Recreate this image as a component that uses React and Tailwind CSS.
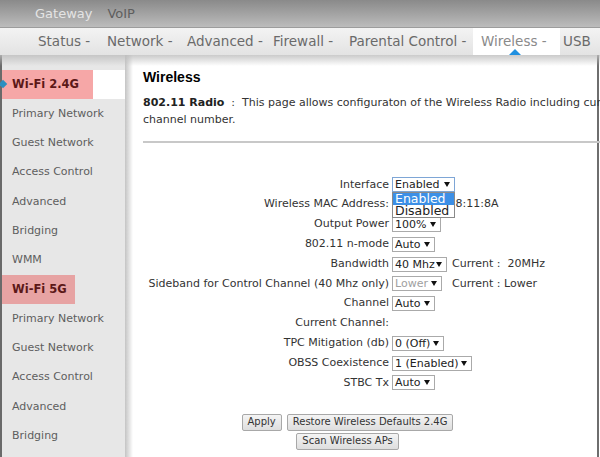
import React from 'react';

const navItems = [
  { label: 'Status -', w: 'w-[69px] pl-[7px]' },
  { label: 'Network -', w: 'w-[80px] pl-[7px]' },
  { label: 'Advanced -', w: 'w-[86px] pl-[7px]' },
  { label: 'Firewall -', w: 'w-[76px] pl-[7px]' },
  { label: 'Parental Control -', w: 'w-[131px] pl-[7px]' },
  { label: 'Wireless -', w: 'w-[87px] pl-[8px]', active: true },
  { label: 'USB', w: 'pl-[3px]' },
];

const sideItems = [
  { label: 'Wi-Fi 2.4G', head: true, first: true },
  { label: 'Primary Network' },
  { label: 'Guest Network' },
  { label: 'Access Control' },
  { label: 'Advanced' },
  { label: 'Bridging' },
  { label: 'WMM' },
  { label: 'Wi-Fi 5G', head: true },
  { label: 'Primary Network' },
  { label: 'Guest Network' },
  { label: 'Access Control' },
  { label: 'Advanced' },
  { label: 'Bridging' },
];

function Arrow() {
  return (
    <svg width="6" height="5" viewBox="0 0 6 5" className="shrink-0">
      <polygon points="0,0 6,0 3,5" fill="#111" />
    </svg>
  );
}

function Select({ value, width, disabled, focused }) {
  return (
    <div
      className={`h-[15px] flex items-center justify-between pl-[2px] pr-[4px] bg-white text-[11px] leading-none border ${
        focused ? 'border-[#7ea6d6]' : 'border-[#aaaaaa]'
      } ${disabled ? 'text-[#a0a0a0]' : 'text-[#222]'}`}
      style={{ width }}
    >
      <span>{value}</span>
      <Arrow />
    </div>
  );
}

function Row({ label, children }) {
  return (
    <div className="flex items-center h-[19.8px]">
      <div className="w-[249px] text-right pr-[3px] whitespace-nowrap">{label}</div>
      <div className="flex items-center">{children}</div>
    </div>
  );
}

function Btn({ children }) {
  return (
    <button className="h-[17px] px-[5px] text-[10px] leading-none text-[#333] border border-[#a8a8a8] rounded-[2px] bg-gradient-to-b from-[#f4f4f4] to-[#dedede]">
      {children}
    </button>
  );
}

export default function App() {
  return (
    <div className="w-[600px] h-[457px] overflow-hidden bg-white flex flex-col" style={{ fontFamily: '"DejaVu Sans", Verdana, sans-serif' }}>
      {/* top bar */}
      <div className="h-[27px] shrink-0 bg-gradient-to-b from-[#8a8a8a] to-[#bcbcbc] flex items-center pl-[35px] text-[13px]">
        <span className="text-[#e4e4e4]">Gateway</span>
        <span className="ml-[15px] text-[#5e5e5e]">VoIP</span>
      </div>

      {/* nav bar */}
      <div className="h-[28px] shrink-0 flex bg-gradient-to-b from-[#f3f3f3] to-[#e3e3e3] border-t border-[#9c9c9c] text-[13.5px] text-[#6a6a6a]">
        <div className="w-[31px] shrink-0" />
        {navItems.map((n) => (
          <div
            key={n.label}
            className={`relative shrink-0 flex items-center whitespace-nowrap ${n.w} ${n.active ? 'bg-white text-[#8a8a8a]' : ''}`}
          >
            {n.label}
            {n.active && (
              <span className="absolute bottom-0 left-[36px] w-0 h-0 border-l-[6px] border-r-[6px] border-b-[6px] border-l-transparent border-r-transparent border-b-[#2090e0]" />
            )}
          </div>
        ))}
      </div>

      {/* body */}
      <div className="relative flex flex-1 min-h-0">
        <div className="pointer-events-none absolute top-0 left-0 right-0 h-[11px] bg-gradient-to-b from-[#bdbdbd]/80 to-transparent z-10" />

        {/* sidebar */}
        <div className="w-[125px] shrink-0 bg-[#e7e7e7] border-l-2 border-[#6a6a6a] pt-[15px] text-[11px] text-[#5e5e5e]">
          {sideItems.map((s, i) => (
            <div key={i} className={`relative h-[29.3px] flex items-center ${s.first ? 'bg-white' : ''}`}>
              {s.head ? (
                <div
                  className={`h-full flex items-center pl-[10px] font-semibold text-[#5c1818] text-[11.5px] ${
                    s.first ? 'w-[91px] bg-[#f6a7a7]' : 'w-[73px] bg-[#e7a3a3]'
                  }`}
                >
                  {s.label}
                </div>
              ) : (
                <span className="pl-[10px]">{s.label}</span>
              )}
              {s.first && (
                <span className="absolute left-[-2px] top-[11px] w-[6px] h-[6px] rotate-45 bg-[#2b8fc0]" />
              )}
            </div>
          ))}
        </div>

        {/* sidebar shadow */}
        <div className="w-[8px] shrink-0 bg-gradient-to-r from-[#c4c4c4] to-white" />

        {/* content */}
        <div className="flex-1 min-w-0 pl-[10px] pt-[14px] text-[11px] text-[#333] border-r-2 border-[#6e6e6e] mr-[1px]">
          <div className="text-[14px] font-bold text-black leading-[16px]" style={{ fontFamily: '"Liberation Sans", Arial, sans-serif' }}>
            Wireless
          </div>
          <div className="mt-[9px] leading-[17px] whitespace-nowrap">
            <span className="font-bold text-[11px] text-[#222]">802.11 Radio</span>
            <span>&nbsp; : &nbsp;This page allows configuraton of the Wireless Radio including current</span>
            <br />
            <span>channel number.</span>
          </div>
          <div className="mt-[13px] h-[2px] bg-[#c8c8c8] w-[500px]" />

          <div className="mt-[32px] text-[11px] text-[#333]">
            <Row label="Interface">
              <div className="relative">
                <Select value="Enabled" width={63} focused />
                <div className="absolute left-0 top-[15px] w-[63px] border border-[#8a8a8a] bg-white text-[12.5px] leading-[12px] z-20">
                  <div className="bg-[#3c8fe6] text-white pl-[2px]">Enabled</div>
                  <div className="pl-[2px] text-[#222]">Disabled</div>
                </div>
              </div>
            </Row>
            <Row label="Wireless MAC Address:">
              <span className="pl-[2px]">20:3D:66:78:11:8A</span>
            </Row>
            <Row label="Output Power">
              <Select value="100%" width={49} />
            </Row>
            <Row label="802.11 n-mode">
              <Select value="Auto" width={43} />
            </Row>
            <Row label="Bandwidth">
              <Select value="40 Mhz" width={55} />
              <span className="ml-[5px] whitespace-nowrap">Current : &nbsp;20MHz</span>
            </Row>
            <Row label="Sideband for Control Channel (40 Mhz only)">
              <Select value="Lower" width={50} disabled />
              <span className="ml-[10px] whitespace-nowrap">Current : Lower</span>
            </Row>
            <Row label="Channel">
              <Select value="Auto" width={43} />
            </Row>
            <Row label="Current Channel:" />
            <Row label="TPC Mitigation (db)">
              <Select value="0 (Off)" width={52} />
            </Row>
            <Row label="OBSS Coexistence">
              <Select value="1 (Enabled)" width={80} />
            </Row>
            <Row label="STBC Tx">
              <Select value="Auto" width={43} />
            </Row>
          </div>

          <div className="w-[409px] mt-[21px] flex flex-col items-center gap-[2px]">
            <div className="flex gap-[5px]">
              <Btn>Apply</Btn>
              <Btn>Restore Wireless Defaults 2.4G</Btn>
            </div>
            <Btn>Scan Wireless APs</Btn>
          </div>
        </div>
      </div>
    </div>
  );
}
